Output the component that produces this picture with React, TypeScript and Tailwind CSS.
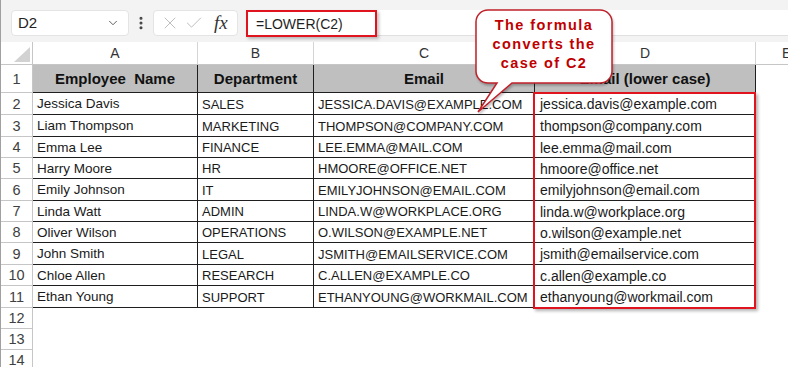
import { Check, ChevronDown, EllipsisVertical, X } from "lucide-react";

type Row = { name: string; dept: string; email: string };

const rows: Row[] = [
  { name: "Jessica Davis", dept: "SALES", email: "JESSICA.DAVIS@EXAMPLE.COM" },
  { name: "Liam Thompson", dept: "MARKETING", email: "THOMPSON@COMPANY.COM" },
  { name: "Emma Lee", dept: "FINANCE", email: "LEE.EMMA@MAIL.COM" },
  { name: "Harry Moore", dept: "HR", email: "HMOORE@OFFICE.NET" },
  { name: "Emily Johnson", dept: "IT", email: "EMILYJOHNSON@EMAIL.COM" },
  { name: "Linda Watt", dept: "ADMIN", email: "LINDA.W@WORKPLACE.ORG" },
  { name: "Oliver Wilson", dept: "OPERATIONS", email: "O.WILSON@EXAMPLE.NET" },
  { name: "John Smith", dept: "LEGAL", email: "JSMITH@EMAILSERVICE.COM" },
  { name: "Chloe Allen", dept: "RESEARCH", email: "C.ALLEN@EXAMPLE.CO" },
  { name: "Ethan Young", dept: "SUPPORT", email: "ETHANYOUNG@WORKMAIL.COM" },
];

const rowHeights = ["h-[22px]", "h-[22px]", "h-[21px]", "h-[21px]", "h-[22px]", "h-[21px]", "h-[21px]", "h-[22px]", "h-[21px]", "h-[22px]"];

const cell = "flex items-center pl-[4px] pt-[2px] border-r border-b border-[#1f1f1f] whitespace-nowrap overflow-hidden";
const rowHead = "w-[32px] shrink-0 flex items-center justify-center pt-[2px] border-r border-b border-[#c6c6c6] text-[14.5px] text-[#404040]";

function Toolbar() {
  return (
    <div className="h-[42px] bg-[#f3f3f3] flex items-start pt-[10px] pl-[10px]">
      <div className="w-[118px] h-[26px] bg-white rounded-[4px] border border-[#e4e4e4] flex items-center justify-between pl-[6px] pr-[8px]">
        <span className="text-[15px] text-[#222]">D2</span>
        <ChevronDown className="w-[14px] h-[14px] text-[#555]" strokeWidth={1.6} />
      </div>
      <div className="w-[24px] h-[26px] flex items-center justify-center">
        <EllipsisVertical className="w-[16px] h-[16px] text-[#444]" strokeWidth={2.6} />
      </div>
      <div className="w-[85px] h-[26px] bg-white rounded-[4px] border border-[#e4e4e4] flex items-center gap-[4px] pl-[6px]">
        <X className="w-[20px] h-[20px] text-[#b8b8b8]" strokeWidth={1.1} />
        <Check className="w-[20px] h-[20px] text-[#b8b8b8]" strokeWidth={1.1} />
        <span className="ml-[6px] text-[19px] italic text-[#333] [font-family:'Liberation_Serif',serif]">fx</span>
      </div>
      <div className="relative flex-1 ml-[8px] h-[26px] bg-white border-b border-[#e0e0e0]">
        <div className="absolute left-0 top-0 w-[131px] h-[27px] border-2 border-[#e0141e] shadow-[2px_2px_3px_rgba(0,0,0,0.25)]" />
        <span className="absolute left-[10px] top-[4px] text-[14px] text-[#1f1f1f]">=LOWER(C2)</span>
      </div>
    </div>
  );
}

function ColumnHeaders() {
  const cols = [
    { label: "A", w: "w-[165px]" },
    { label: "B", w: "w-[116px]" },
    { label: "C", w: "w-[221px]" },
    { label: "D", w: "w-[221px]" },
  ];
  return (
    <div className="h-[23px] flex bg-white border-b border-[#c6c6c6]">
      <div className="w-[32px] shrink-0 border-r border-[#c6c6c6] flex items-end justify-end pr-[2px] pb-[2px]">
        <svg width="16" height="15" viewBox="0 0 16 15">
          <polygon points="16,0 16,15 0,15" fill="#d2d2d2" />
        </svg>
      </div>
      {cols.map((c) => (
        <div key={c.label} className={`${c.w} shrink-0 border-r border-[#d4d4d4] flex items-center justify-center text-[14px] text-[#333]`}>
          {c.label}
        </div>
      ))}
      <div className="flex-1 flex items-center pl-[26px] text-[14px] text-[#333]">E</div>
    </div>
  );
}

function Callout() {
  return (
    <div className="absolute left-[470px] top-[5px] w-[150px] h-[112px]">
      <svg width="150" height="112" viewBox="0 0 150 112" className="absolute inset-0 drop-shadow-[1px_2px_1px_rgba(0,0,0,0.25)]">
        <path
          d="M17 5 H129 A12 12 0 0 1 141 17 V66 A12 12 0 0 1 129 78 H41 L7 107 L26 78 H17 A12 12 0 0 1 5 66 V17 A12 12 0 0 1 17 5 Z"
          fill="#ffffff"
          stroke="#c0202a"
          strokeWidth="1.5"
        />
      </svg>
      <div className="absolute left-[5px] top-[11px] w-[136px] flex flex-col items-center text-[14.5px] leading-[19px] font-bold tracking-[1.4px] text-[#c00000]">
        <span>The formula</span>
        <span>converts the</span>
        <span>case of C2</span>
      </div>
    </div>
  );
}

export default function App() {
  return (
    <div className="relative w-[788px] h-[367px] overflow-hidden bg-white border-l border-[#a0a0a0] [font-family:'Liberation_Sans',Arial,sans-serif]">
      <Toolbar />
      <div className="relative">
        <ColumnHeaders />

        <div className="h-[28px] flex">
          <div className={rowHead}>1</div>
          {[
            { t: "Employee  Name", w: "w-[165px]" },
            { t: "Department", w: "w-[116px]" },
            { t: "Email", w: "w-[221px]" },
            { t: "Email (lower case)", w: "w-[221px]" },
          ].map((h) => (
            <div
              key={h.t}
              className={`${h.w} shrink-0 flex items-center justify-center pt-[2px] bg-[#bfbfbf] border-r border-b border-[#1f1f1f] text-[15px] font-bold text-[#111] whitespace-pre`}
            >
              {h.t}
            </div>
          ))}
          <div className="flex-1" />
        </div>

        {rows.map((r, i) => (
          <div key={r.name} className={`${rowHeights[i]} flex text-[#1a1a1a]`}>
            <div className={rowHead}>{i + 2}</div>
            <div className={`w-[165px] shrink-0 text-[13.5px] ${cell}`}>{r.name}</div>
            <div className={`w-[116px] shrink-0 text-[13px] ${cell}`}>{r.dept}</div>
            <div className={`w-[221px] shrink-0 text-[13px] ${cell}`}>{r.email}</div>
            <div className={`w-[221px] shrink-0 text-[14px] ${cell} pl-[5px]`}>{r.email.toLowerCase()}</div>
            <div className="flex-1" />
          </div>
        ))}

        {[12, 13, 14].map((n) => (
          <div key={n} className="h-[21px] flex">
            <div className={rowHead}>{n}</div>
          </div>
        ))}

        <div className="absolute left-[532px] top-[50px] w-[223px] h-[217px] border-2 border-[#e0141e] shadow-[2px_2px_3px_rgba(0,0,0,0.3)]" />
      </div>
      <Callout />
    </div>
  );
}
